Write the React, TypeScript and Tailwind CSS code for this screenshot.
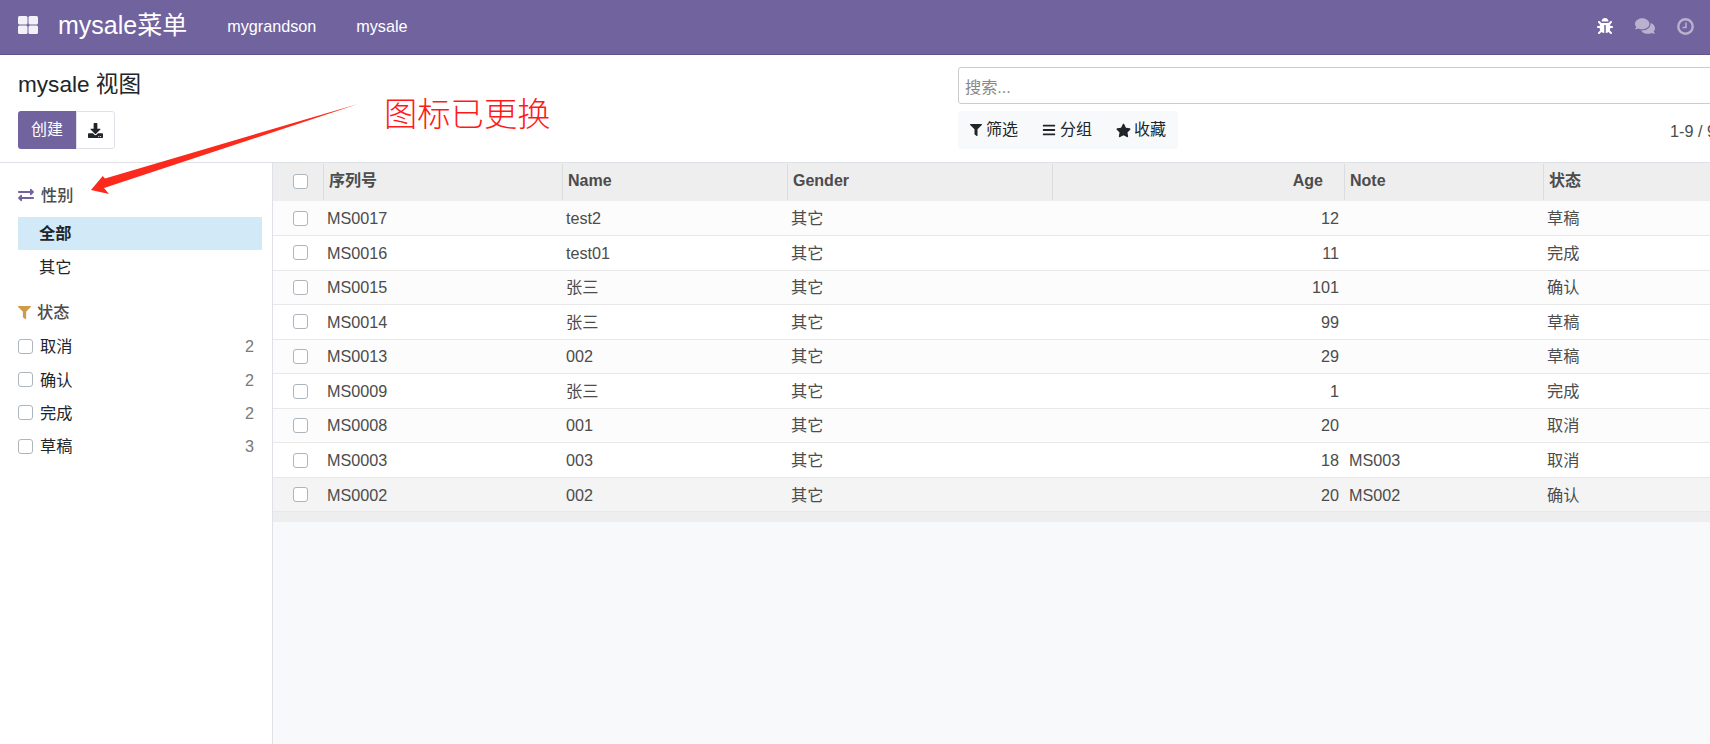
import React from "react";
import {
  FaBars,
  FaBug,
  FaComments,
  FaDownload,
  FaExchangeAlt,
  FaFilter,
  FaStar,
} from "react-icons/fa";

const rows = [
  ["MS0017", "test2", "其它", "12", "", "草稿"],
  ["MS0016", "test01", "其它", "11", "", "完成"],
  ["MS0015", "张三", "其它", "101", "", "确认"],
  ["MS0014", "张三", "其它", "99", "", "草稿"],
  ["MS0013", "002", "其它", "29", "", "草稿"],
  ["MS0009", "张三", "其它", "1", "", "完成"],
  ["MS0008", "001", "其它", "20", "", "取消"],
  ["MS0003", "003", "其它", "18", "MS003", "取消"],
  ["MS0002", "002", "其它", "20", "MS002", "确认"],
];

const states = [
  ["取消", "2"],
  ["确认", "2"],
  ["完成", "2"],
  ["草稿", "3"],
];

const Check = ({ className = "" }: { className?: string }) => (
  <span
    className={
      "block w-[15px] h-[15px] rounded-[3px] border border-[#adb5bd] bg-white " +
      className
    }
  />
);

const Th = ({
  children,
  className = "",
}: {
  children?: React.ReactNode;
  className?: string;
}) => (
  <th className={"p-0 font-bold text-[16px] text-[#4c4c4c] " + className}>
    <div className="h-[36px] border-l border-[#dcdcdc] flex items-center px-[5px] pb-[2px]">
      {children}
    </div>
  </th>
);

const AppsIcon = () => (
  <svg width="20" height="18" viewBox="0 0 20 18" className="ml-[18px] mb-[4px]">
    <rect x="0" y="0" width="9.5" height="8.5" rx="1.5" fill="#f3f1f8" />
    <rect x="10.5" y="0" width="9.5" height="8.5" rx="1.5" fill="#f3f1f8" />
    <rect x="0" y="9.5" width="9.5" height="8.5" rx="1.5" fill="#f3f1f8" />
    <rect x="10.5" y="9.5" width="9.5" height="8.5" rx="1.5" fill="#f3f1f8" />
  </svg>
);

const ClockIcon = () => (
  <svg width="17" height="17" viewBox="0 0 17 17" fill="none" stroke="#ffffff" strokeOpacity="0.5">
    <circle cx="8.5" cy="8.5" r="7.2" strokeWidth="2.4" />
    <path d="M9 4.5V9.5H5.5" strokeWidth="1.6" />
  </svg>
);

export default function App() {
  return (
    <div className="relative w-[1710px] h-[744px] overflow-hidden flex flex-col bg-[#f8f9fa] font-['Liberation_Sans','Noto_Sans_CJK_SC',sans-serif] text-[16.2px] text-[#4c4c4c]">
      {/* top bar */}
      <nav className="h-[55px] shrink-0 bg-[#71639e] border-b border-[#5f5388] flex items-center text-white">
        <AppsIcon />
        <span className="ml-[20px] text-[25px] mb-[2px]">mysale菜单</span>
        <span className="ml-[40px] mb-[2px]">mygrandson</span>
        <span className="ml-[40px] mb-[2px]">mysale</span>
        <div className="ml-auto flex items-center gap-[22px] pr-[16px] mb-[2px]">
          <FaBug className="text-[16px]" />
          <FaComments className="text-[20px] text-white/50" />
          <ClockIcon />
        </div>
      </nav>

      {/* control panel */}
      <div className="h-[108px] shrink-0 bg-white border-b border-[#dee2e6] flex">
        <div className="w-[958px] shrink-0 pl-[18px] pt-[14px]">
          <h1 className="text-[22.6px] leading-[32px] text-[#212529]">
            mysale 视图
          </h1>
          <div className="flex mt-[10px]">
            <button className="h-[38px] w-[58px] rounded-l-[3px] bg-[#71639e] text-white text-[16px]">
              创建
            </button>
            <button className="h-[38px] w-[39px] rounded-r-[3px] border border-[#dee2e6] bg-white flex items-center justify-center text-[#212529]">
              <FaDownload className="text-[15px]" />
            </button>
          </div>
        </div>
        <div className="flex-1 pt-[12px] min-w-0">
          <div className="w-[900px] h-[37px] rounded-[3px] border border-[#cccccc] flex items-center pl-[6px] pt-[3px] text-[#888888]">
            搜索...
          </div>
          <div className="flex items-start justify-between mt-[7px]">
            <div className="h-[38px] w-[220px] rounded-[4px] bg-[#f8f9fa] flex items-center pl-[12px] gap-[24px] text-[16px] text-[#212529]">
              <span className="flex items-center gap-[4px]">
                <FaFilter className="text-[12px]" />
                筛选
              </span>
              <span className="flex items-center gap-[4px]">
                <FaBars className="text-[14px]" />
                分组
              </span>
              <span className="flex items-center gap-[3px]">
                <FaStar className="text-[15px]" />
                收藏
              </span>
            </div>
            <span className="mt-[8px] whitespace-nowrap mr-[-6px]">
              1-9 / 9
            </span>
          </div>
        </div>
      </div>

      <div className="flex flex-1 min-h-0">
        {/* search panel */}
        <aside className="w-[273px] shrink-0 bg-white border-r border-[#dee2e6] pl-[18px] pr-[10px] pt-[20px]">
          <div className="h-[24px] flex items-center gap-[7px] font-medium">
            <FaExchangeAlt className="text-[16px] text-[#71639e]" />
            性别
          </div>
          <div className="mt-[10px] h-[33px] bg-[#d2e9f7] pl-[21px] flex items-center font-bold text-[#212529]">
            全部
          </div>
          <div className="h-[35px] pl-[21px] flex items-center text-[#212529]">
            其它
          </div>
          <div className="mt-[15px] h-[24px] flex items-center gap-[6px] font-medium">
            <FaFilter className="text-[13px] text-[#d19a4b]" />
            状态
          </div>
          <div className="mt-[6px]">
            {states.map(([label, count]) => (
              <div
                key={label}
                className="h-[33.2px] flex items-center text-[#212529]"
              >
                <Check />
                <span className="ml-[7px]">{label}</span>
                <span className="ml-auto mr-[8px] text-[#7a7a7a]">{count}</span>
              </div>
            ))}
          </div>
        </aside>

        {/* list */}
        <main className="flex-1 min-w-0 overflow-hidden">
          <table className="w-[1500px] table-fixed border-collapse">
            <colgroup>
              <col className="w-[50px]" />
              <col className="w-[239px]" />
              <col className="w-[225px]" />
              <col className="w-[265px]" />
              <col className="w-[292px]" />
              <col className="w-[199px]" />
              <col />
            </colgroup>
            <thead>
              <tr className="h-[38px] bg-[#eeeeee]">
                <th className="p-0">
                  <Check className="ml-[20px] mb-[2px]" />
                </th>
                <Th>序列号</Th>
                <Th>Name</Th>
                <Th>Gender</Th>
                <Th className="[&>div]:justify-end [&>div]:pr-[21px]">Age</Th>
                <Th>Note</Th>
                <Th>状态</Th>
              </tr>
            </thead>
            <tbody>
              {rows.map((r, i) => (
                <tr
                  key={r[0]}
                  className={
                    "h-[34.55px] border-b border-[#e8e8e8] " +
                    (i === 8
                      ? "bg-[#f4f4f4]"
                      : i % 2 === 0
                        ? "bg-[#fcfcfc]"
                        : "bg-white")
                  }
                >
                  <td className="p-0">
                    <Check className="ml-[20px]" />
                  </td>
                  <td className="p-0 pl-[4px]">{r[0]}</td>
                  <td className="p-0 pl-[4px]">{r[1]}</td>
                  <td className="p-0 pl-[4px]">{r[2]}</td>
                  <td className="p-0 pr-[5px] text-right">{r[3]}</td>
                  <td className="p-0 pl-[5px]">{r[4]}</td>
                  <td className="p-0 pl-[4px]">{r[5]}</td>
                </tr>
              ))}
              <tr className="h-[10px] bg-[#eeeeee]">
                <td colSpan={7} className="p-0" />
              </tr>
            </tbody>
          </table>
        </main>
      </div>

      {/* annotation */}
      <div className="absolute left-[384px] top-[92px] text-[33.3px] leading-[40px] text-[#ff1a1a] font-['Noto_Sans_CJK_SC',sans-serif] font-light">
        图标已更换
      </div>
      <svg
        className="absolute left-0 top-0 pointer-events-none"
        width="400"
        height="220"
        viewBox="0 0 400 220"
      >
        <polygon
          points="358,104 105,178.5 102.7,176 91,190 109,194 104,188"
          fill="#fb2a1d"
        />
      </svg>
    </div>
  );
}
